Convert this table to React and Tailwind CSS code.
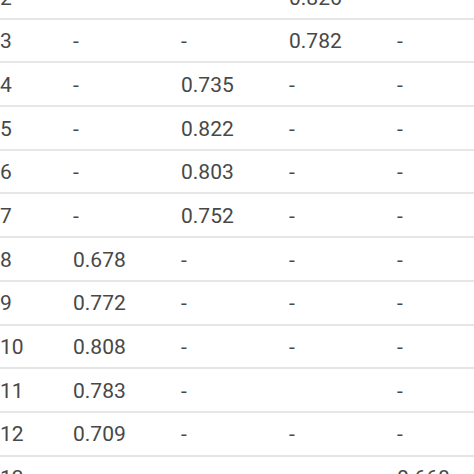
const rows = [
  ["2", "-", "-", "0.826", "-"],
  ["3", "-", "-", "0.782", "-"],
  ["4", "-", "0.735", "-", "-"],
  ["5", "-", "0.822", "-", "-"],
  ["6", "-", "0.803", "-", "-"],
  ["7", "-", "0.752", "-", "-"],
  ["8", "0.678", "-", "-", "-"],
  ["9", "0.772", "-", "-", "-"],
  ["10", "0.808", "-", "-", "-"],
  ["11", "0.783", "-", "", "-"],
  ["12", "0.709", "-", "-", "-"],
  ["13", "-", "-", "-", "0.668"],
];

export default function App() {
  return (
    <div
      className="w-[474px] h-[474px] overflow-hidden bg-white text-[21px] text-[#484848]"
      style={{ fontFamily: "Roboto, 'Liberation Sans', sans-serif" }}
    >
      <div className="-mt-[24px]">
        {rows.map((r) => (
          <div
            key={r[0]}
            className="grid grid-cols-[73px_108px_108px_108px_1fr] items-center h-[43.7px] pt-[3px] border-b-2 border-[#e6e6e6]"
          >
            {r.map((c, i) => (
              <div key={i}>{c}</div>
            ))}
          </div>
        ))}
      </div>
    </div>
  );
}
